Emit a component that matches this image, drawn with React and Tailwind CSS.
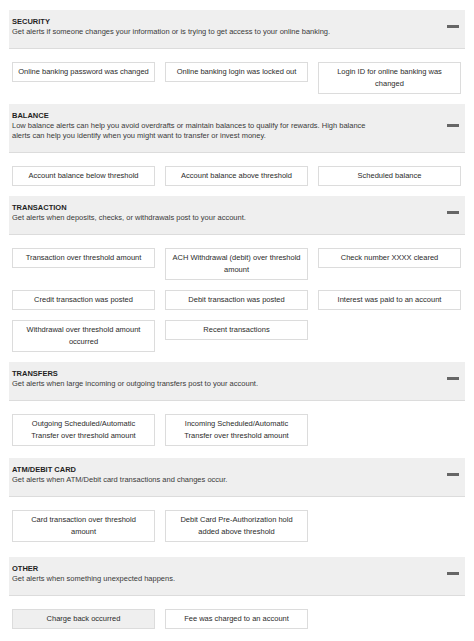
const sections = [
  {
    title: 'SECURITY',
    desc: 'Get alerts if someone changes your information or is trying to get access to your online banking.',
    alerts: [
      ['Online banking password was changed'],
      ['Online banking login was locked out'],
      ['Login ID for online banking was', 'changed'],
    ],
  },
  {
    title: 'BALANCE',
    desc: 'Low balance alerts can help you avoid overdrafts or maintain balances to qualify for rewards. High balance alerts can help you identify when you might want to transfer or invest money.',
    alerts: [
      ['Account balance below threshold'],
      ['Account balance above threshold'],
      ['Scheduled balance'],
    ],
  },
  {
    title: 'TRANSACTION',
    desc: 'Get alerts when deposits, checks, or withdrawals post to your account.',
    alerts: [
      ['Transaction over threshold amount'],
      ['ACH Withdrawal (debit) over threshold', 'amount'],
      ['Check number XXXX cleared'],
      ['Credit transaction was posted'],
      ['Debit transaction was posted'],
      ['Interest was paid to an account'],
      ['Withdrawal over threshold amount', 'occurred'],
      ['Recent transactions'],
    ],
  },
  {
    title: 'TRANSFERS',
    desc: 'Get alerts when large incoming or outgoing transfers post to your account.',
    alerts: [
      ['Outgoing Scheduled/Automatic', 'Transfer over threshold amount'],
      ['Incoming Scheduled/Automatic', 'Transfer over threshold amount'],
    ],
    spacing: 'mb-[12px]',
  },
  {
    title: 'ATM/DEBIT CARD',
    desc: 'Get alerts when ATM/Debit card transactions and changes occur.',
    alerts: [
      ['Card transaction over threshold', 'amount'],
      ['Debit Card Pre-Authorization hold', 'added above threshold'],
    ],
    spacing: 'mb-[15px]',
  },
  {
    title: 'OTHER',
    desc: 'Get alerts when something unexpected happens.',
    alerts: [
      ['Charge back occurred'],
      ['Fee was charged to an account'],
    ],
    active: 0,
  },
];

const AlertButton = ({ lines, active }) => (
  <button
    type="button"
    className={`border border-[#dcdcdc] px-[4px] py-[3px] text-center text-[7.5px] leading-[12px] text-[#2b2b2b] whitespace-nowrap ${
      active ? 'bg-[#efefef]' : 'bg-white'
    }`}
  >
    {lines.map((line, i) => (
      <span key={i} className="block">
        {line}
      </span>
    ))}
  </button>
);

const Section = ({ section }) => (
  <div>
    <div className="flex items-center justify-between bg-[#efefef] border-b border-[#dcdcdc] pl-[3px] pr-[6px] pt-[6px] pb-[11px]">
      <div className="max-w-[368px]">
        <h3 className="text-[7.5px] leading-[11px] font-bold text-[#1f1f1f]">{section.title}</h3>
        <p className="text-[7.5px] leading-[10px] text-[#3a3a3a]">{section.desc}</p>
      </div>
      <span className="w-[12px] h-[3px] bg-[#666]" />
    </div>
    <div
      className={`grid grid-cols-[143px_143px_143px] gap-x-[10px] gap-y-[10px] items-start pl-[3px] mt-[13px] ${
        section.spacing || 'mb-[10px]'
      }`}
    >
      {section.alerts.map((lines, i) => (
        <AlertButton key={i} lines={lines} active={section.active === i} />
      ))}
    </div>
  </div>
);

export default function App() {
  return (
    <div
      className="min-h-screen bg-white px-[9px] pt-[10px]"
      style={{ fontFamily: '"Liberation Sans", Arial, sans-serif' }}
    >
      {sections.map((s) => (
        <Section key={s.title} section={s} />
      ))}
    </div>
  );
}
